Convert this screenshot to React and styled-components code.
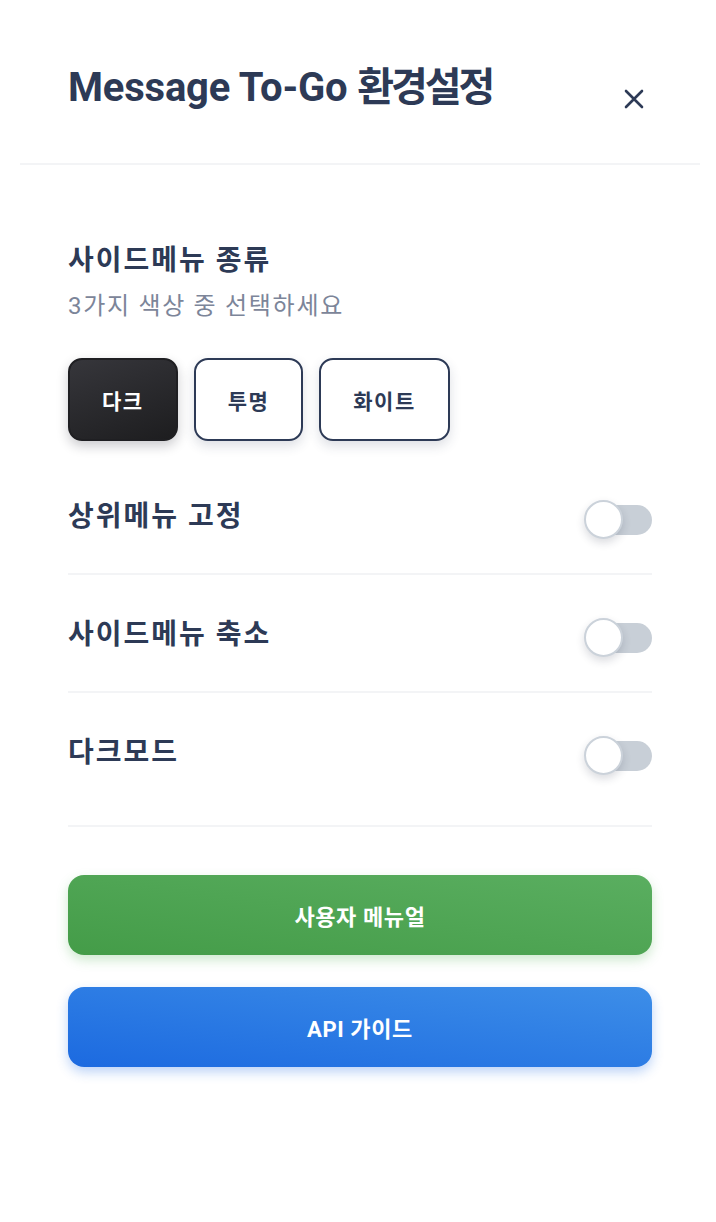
import React, { useState } from "react";
import styled, { createGlobalStyle } from "styled-components";

const GlobalStyle = createGlobalStyle`
  html, body {
    margin: 0;
    padding: 0;
    background: #ffffff;
  }
  body {
    font-family: Roboto, "Noto Sans CJK KR", sans-serif;
    color: #2d3a56;
    -webkit-font-smoothing: antialiased;
  }
  * { box-sizing: border-box; }
`;

const Panel = styled.div`
  width: 716px;
  min-height: 1222px;
  padding: 0 16px 0 20px;
  background: #ffffff;
`;

const Header = styled.header`
  display: flex;
  justify-content: space-between;
  align-items: flex-start;
  padding: 64px 48px 46px 48px;
  border-bottom: 2px solid #f3f4f6;
`;

const Title = styled.h1`
  margin: 0;
  font-size: 40px;
  line-height: 48px;
  font-weight: 700;
  color: #2d3a56;
  letter-spacing: -0.2px;
`;

const TitleKo = styled.span`
  letter-spacing: -3px;
`;

const CloseButton = styled.button`
  width: 36px;
  height: 36px;
  margin-top: 17px;
  padding: 0;
  border: none;
  background: transparent;
  display: flex;
  align-items: center;
  justify-content: center;
  cursor: pointer;
  color: #2d3a56;
`;

const Body = styled.main`
  padding: 78px 48px 0 48px;
`;

const SectionTitle = styled.h2`
  margin: 0;
  font-size: 28px;
  line-height: 36px;
  font-weight: 700;
  letter-spacing: 2px;
  color: #2d3a56;
`;

const SectionHint = styled.p`
  margin: 11px 0 0 0;
  font-size: 24px;
  line-height: 32px;
  font-weight: 400;
  letter-spacing: 1.7px;
  color: #7c8599;
`;

const ChoiceRow = styled.div`
  display: flex;
  gap: 16px;
  margin-top: 36px;
`;

const Choice = styled.button`
  height: 83px;
  padding: 0 32px;
  border-radius: 14px;
  font-family: inherit;
  font-size: 21px;
  font-weight: 700;
  letter-spacing: 1.5px;
  cursor: pointer;
  border: 2px solid ${(p) => (p.$active ? "#1f1f22" : "#2d3a56")};
  color: ${(p) => (p.$active ? "#ffffff" : "#2d3a56")};
  background: ${(p) =>
    p.$active ? "linear-gradient(160deg, #36363b 0%, #1d1d1f 100%)" : "#ffffff"};
  box-shadow: ${(p) =>
    p.$active
      ? "0 5px 12px rgba(20, 20, 30, 0.22)"
      : "0 5px 12px rgba(45, 58, 86, 0.16)"};
`;

const ToggleList = styled.div`
  margin-top: 16px;
`;

const ToggleRow = styled.div`
  display: flex;
  align-items: center;
  justify-content: space-between;
  padding: 42px 0 32px 0;
  border-bottom: 2px solid #f3f4f6;

  &:last-child {
    padding-bottom: 48px;
  }
`;

const RowLabel = styled.span`
  font-size: 28px;
  line-height: 36px;
  font-weight: 700;
  letter-spacing: 2px;
  color: #2d3a56;
  margin-bottom: 6px;
`;

const Switch = styled.button`
  position: relative;
  width: 68px;
  height: 40px;
  padding: 0;
  border: none;
  background: transparent;
  cursor: pointer;
  display: flex;
  align-items: center;
  justify-content: flex-end;
`;

const Track = styled.span`
  display: block;
  width: 60px;
  height: 30px;
  border-radius: 15px;
  background: ${(p) => (p.$on ? "#4a9f4e" : "#c8cfd7")};
`;

const Knob = styled.span`
  position: absolute;
  top: 0;
  left: ${(p) => (p.$on ? "29px" : "0")};
  width: 39px;
  height: 39px;
  border-radius: 50%;
  background: #ffffff;
  border: 2px solid #cbd2da;
  box-shadow: 0 4px 9px rgba(30, 40, 60, 0.16);
`;

const Actions = styled.div`
  display: flex;
  flex-direction: column;
  gap: 32px;
  margin-top: 48px;
`;

const ActionButton = styled.button`
  height: 80px;
  width: 100%;
  border: none;
  border-radius: 16px;
  font-family: inherit;
  font-size: 22px;
  font-weight: 700;
  letter-spacing: 0.6px;
  color: #ffffff;
  cursor: pointer;
  background: ${(p) =>
    p.$tone === "green"
      ? "linear-gradient(to top right, #449c48, #5aae60)"
      : "linear-gradient(to top right, #1c6ae0, #3d8ee8)"};
  box-shadow: ${(p) =>
    p.$tone === "green"
      ? "0 5px 12px rgba(76, 175, 80, 0.28)"
      : "0 5px 12px rgba(33, 110, 230, 0.3)"};
`;

const CloseIcon = () => (
  <svg width="20" height="20" viewBox="0 0 20 20" fill="none">
    <path
      d="M2 2 L18 18 M18 2 L2 18"
      stroke="currentColor"
      strokeWidth="2.6"
      strokeLinecap="round"
    />
  </svg>
);

const schemes = ["다크", "투명", "화이트"];
const toggles = ["상위메뉴 고정", "사이드메뉴 축소", "다크모드"];

export default function App() {
  const [scheme, setScheme] = useState("다크");
  const [on, setOn] = useState({});

  return (
    <>
      <GlobalStyle />
      <Panel>
        <Header>
          <Title>
            Message To-Go <TitleKo>환경설정</TitleKo>
          </Title>
          <CloseButton aria-label="닫기">
            <CloseIcon />
          </CloseButton>
        </Header>
        <Body>
          <SectionTitle>사이드메뉴 종류</SectionTitle>
          <SectionHint>3가지 색상 중 선택하세요</SectionHint>
          <ChoiceRow>
            {schemes.map((s) => (
              <Choice key={s} $active={scheme === s} onClick={() => setScheme(s)}>
                {s}
              </Choice>
            ))}
          </ChoiceRow>
          <ToggleList>
            {toggles.map((t) => (
              <ToggleRow key={t}>
                <RowLabel>{t}</RowLabel>
                <Switch onClick={() => setOn({ ...on, [t]: !on[t] })}>
                  <Track $on={!!on[t]} />
                  <Knob $on={!!on[t]} />
                </Switch>
              </ToggleRow>
            ))}
          </ToggleList>
          <Actions>
            <ActionButton $tone="green">사용자 메뉴얼</ActionButton>
            <ActionButton $tone="blue">API 가이드</ActionButton>
          </Actions>
        </Body>
      </Panel>
    </>
  );
}
